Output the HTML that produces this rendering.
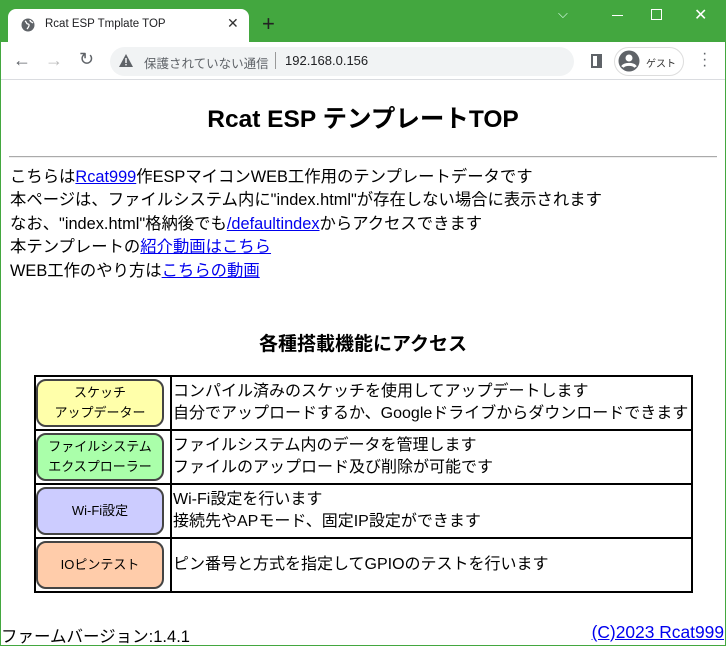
<!DOCTYPE html>
<html><head><meta charset="utf-8"><style>
*{margin:0;padding:0;box-sizing:border-box}
body{width:726px;height:646px;overflow:hidden;background:#fff;font-family:"Liberation Sans","Noto Sans CJK JP",sans-serif;color:#000;position:relative}
.a{position:absolute;white-space:nowrap}
a{color:#0000ee;text-decoration:underline}
.frame{position:absolute;left:0;top:0;width:726px;height:646px;border:1px solid #43a73f;pointer-events:none}
.line{font-size:16.35px;left:10px;line-height:23px}
table{position:absolute;left:34px;top:375px;border-collapse:collapse;border:2px solid #000}
td{border:2px solid #000;height:54px;font-size:16px;line-height:22px;padding:0 1px;vertical-align:middle;white-space:nowrap}
.btn{width:128px;height:48px;border:2px solid #444;border-radius:10px;font-size:13px;line-height:20px;text-align:center;display:flex;align-items:center;justify-content:center;margin:0 -2px 0 -1px}
</style></head><body>
<div class="a" style="left:0;top:0;width:726px;height:42px;background:#43a73f"></div>
<div class="a" style="left:8px;top:9px;width:241px;height:34px;background:#fff;border-radius:8px 8px 0 0"></div>
<svg class="a" style="left:21px;top:18px" width="14" height="14" viewBox="0 0 14 14"><circle cx="7" cy="7" r="6.5" fill="#5f6368"/><path d="M4 3c2 1 1 3 3 3s1 3-1 5M9 2c0 2 2 2 3 3" stroke="#fff" stroke-width="1.3" fill="none"/></svg>
<div class="a" style="left:45px;top:18px;font-size:11.5px;color:#202124">Rcat ESP Tmplate TOP</div>
<div class="a" style="left:227px;top:15px;font-size:14px;color:#333">✕</div>
<div class="a" style="left:262px;top:11px;font-size:22px;color:#222">+</div>
<div class="a" style="left:558px;top:6px;font-size:13px;color:#dfe">⌵</div>
<div class="a" style="left:612px;top:15px;width:11px;height:1px;background:#fff"></div>
<div class="a" style="left:651px;top:9px;width:11px;height:11px;border:1px solid #fff"></div>
<div class="a" style="left:694px;top:5px;font-size:16px;color:#fff">✕</div>
<div class="a" style="left:13px;top:50px;font-size:18px;color:#5f6368">←</div>
<div class="a" style="left:45px;top:50px;font-size:18px;color:#bbb">→</div>
<div class="a" style="left:79px;top:49px;font-size:18px;color:#5f6368">↻</div>
<div class="a" style="left:110px;top:47px;height:29px;width:464px;background:#f1f3f4;border-radius:15px"></div>
<svg class="a" style="left:119px;top:54px" width="14" height="13" viewBox="0 0 14 13"><path d="M7 0L14 13H0Z" fill="#5f6368"/><rect x="6.3" y="4" width="1.4" height="5" fill="#fff"/><rect x="6.3" y="10" width="1.4" height="1.4" fill="#fff"/></svg>
<div class="a" style="left:144px;top:53px;font-size:12.5px;color:#5f6368">保護されていない通信</div>
<div class="a" style="left:275px;top:52px;width:1px;height:17px;background:#999"></div>
<div class="a" style="left:285px;top:53px;font-size:13px;color:#202124">192.168.0.156</div>
<div class="a" style="left:591px;top:54px;width:11px;height:14px;border:2px solid #5f6368;border-right-width:5px"></div>
<div class="a" style="left:614px;top:47px;width:70px;height:29px;border:1px solid #ddd;border-radius:15px"></div>
<svg class="a" style="left:618px;top:50px" width="22" height="22" viewBox="0 0 22 22"><circle cx="11" cy="11" r="10.5" fill="#5f6368"/><circle cx="11" cy="8" r="3.5" fill="#fff"/><path d="M4.5 17c2-3.5 11-3.5 13 0" stroke="#fff" stroke-width="3" fill="none"/></svg>
<div class="a" style="left:646px;top:55px;font-size:10px;color:#333">ゲスト</div>
<div class="a" style="left:702px;top:51px;font-size:16px;color:#5f6368;line-height:6px;">·<br>·<br>·</div>
<div class="a" style="left:0;top:79px;width:726px;height:1px;background:#dadce0"></div>

<div class="a" style="left:0;width:726px;text-align:center;top:100px;font-size:24.5px;font-weight:bold">Rcat ESP テンプレートTOP</div>
<div class="a" style="left:9px;top:156px;width:708px;height:2px;background:#aaa;border-bottom:1px solid #eee"></div>
<div class="a line" style="top:166px">こちらは<a>Rcat999</a>作ESPマイコンWEB工作用のテンプレートデータです</div>
<div class="a line" style="top:189px">本ページは、ファイルシステム内に"index.html"が存在しない場合に表示されます</div>
<div class="a line" style="top:213px">なお、"index.html"格納後でも<a>/defaultindex</a>からアクセスできます</div>
<div class="a line" style="top:236px">本テンプレートの<a>紹介動画はこちら</a></div>
<div class="a line" style="top:260px">WEB工作のやり方は<a>こちらの動画</a></div>
<div class="a" style="left:0;width:726px;text-align:center;top:329px;font-size:19px;font-weight:bold">各種搭載機能にアクセス</div>
<table>
<tr><td style="width:136px"><div class="btn" style="background:#ffffaa">スケッチ<br>アップデーター</div></td><td style="width:521px">コンパイル済みのスケッチを使用してアップデートします<br>自分でアップロードするか、Googleドライブからダウンロードできます</td></tr>
<tr><td><div class="btn" style="background:#aaffaa">ファイルシステム<br>エクスプローラー</div></td><td>ファイルシステム内のデータを管理します<br>ファイルのアップロード及び削除が可能です</td></tr>
<tr><td><div class="btn" style="background:#ccccff">Wi-Fi設定</div></td><td>Wi-Fi設定を行います<br>接続先やAPモード、固定IP設定ができます</td></tr>
<tr><td><div class="btn" style="background:#ffccaa">IOピンテスト</div></td><td>ピン番号と方式を指定してGPIOのテストを行います</td></tr>
</table>
<div class="a" style="left:1px;top:623px;font-size:16.5px">ファームバージョン:1.4.1</div>
<div class="a" style="right:2px;top:622px;font-size:17.4px"><a>(C)2023 Rcat999</a></div>
<div class="frame"></div>
</body></html>
